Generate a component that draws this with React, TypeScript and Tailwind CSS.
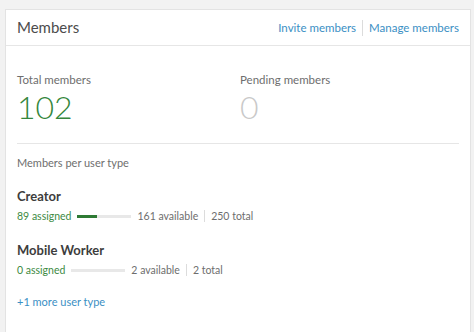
import React from "react";

const userTypes = [
  { name: "Creator", assigned: 89, available: 161, total: 250 },
  { name: "Mobile Worker", assigned: 0, available: 2, total: 2 },
];

const App = () => {
  return (
    <div
      className="w-[474px] h-[332px] overflow-hidden bg-[#f2f2f2] pt-[9px] pl-[5px] pr-[3px]"
      style={{ fontFamily: "Lato, 'Open Sans', sans-serif" }}
    >
      <div className="bg-white border border-[#e3e3e3] h-[340px]">
        <div className="flex items-center justify-between h-[36px] px-[11px] border-b border-[#e6e6e6]">
          <h2 className="text-[15px] text-[#4c4c4c]">Members</h2>
          <div className="flex items-center text-[11.5px] text-[#3b8fc4]">
            <span>Invite members</span>
            <span className="mx-[6px] w-px h-[16px] bg-[#dcdcdc]"></span>
            <span>Manage members</span>
          </div>
        </div>

        <div className="mx-[11px] pt-[26px] pb-[17px] border-b border-[#e6e6e6] grid grid-cols-2">
          <div>
            <div className="text-[11.5px] text-[#6e6e6e] leading-[16px]">Total members</div>
            <div className="text-[32px] text-[#35873c] leading-[38px] font-light">102</div>
          </div>
          <div className="pl-[2px]">
            <div className="text-[11.5px] text-[#6e6e6e] leading-[16px]">Pending members</div>
            <div className="text-[32px] text-[#c9c9c9] leading-[38px] font-light">0</div>
          </div>
        </div>

        <div className="px-[11px] pt-[11px]">
          <div className="text-[11px] text-[#6e6e6e] leading-[16px]">Members per user type</div>
          <div className="mt-[16px] flex flex-col gap-[18px]">
            {userTypes.map((t) => (
              <div key={t.name}>
                <div className="text-[13px] font-bold text-[#3d3d3d] leading-[18px]">{t.name}</div>
                <div className="flex items-center mt-[4px] text-[10.5px] leading-[14px] text-[#6e6e6e]">
                  <span className="text-[#3d8a43]">{t.assigned} assigned</span>
                  <div className="ml-[6px] w-[54px] h-[3px] bg-[#e8e8e8]">
                    <div className="h-full bg-[#2e7a34]" style={{ width: `${(t.assigned / t.total) * 100}%` }}></div>
                  </div>
                  <span className="ml-[6px]">{t.available} available</span>
                  <span className="mx-[6px] w-px h-[12px] bg-[#dcdcdc]"></span>
                  <span>{t.total} total</span>
                </div>
              </div>
            ))}
          </div>
          <div className="mt-[17px] text-[11px] text-[#3b8fc4]">+1 more user type</div>
        </div>
      </div>
    </div>
  );
};

export default App;
